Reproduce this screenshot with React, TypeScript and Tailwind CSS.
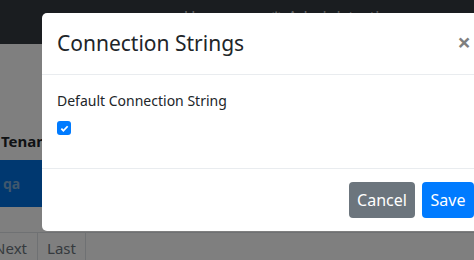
import React from 'react';

export default function App() {
    return (
        <div className="relative w-[474px] h-[260px] overflow-hidden bg-white font-['Noto_Sans',sans-serif] text-[#212529]">
            {/* Page behind the modal */}
            <div className="h-[44px] bg-[#343a40] flex items-start pt-[5px] pl-[170px] gap-[40px] text-[16px] text-[#c8c8c8]">
                <span>⌂ Home</span>
                <span>⚙ Administration</span>
            </div>
            <div className="flex flex-col">
                <div className="h-[116px] flex items-end pb-[8px] pl-[1px]">
                    <span className="font-bold text-[15px]">Tenant</span>
                </div>
                <div className="h-[47px] bg-[#0070e0] flex items-center pl-[3px] text-[14px] font-bold text-[#7faeda]">qa</div>
                <div className="h-[25px]" />
                <div className="h-[28px] flex border-t border-[#dee2e6] text-[15px] text-[#6c757d]">
                    <div className="w-[38px] border-r border-[#dee2e6] flex items-center justify-end pr-[10px] pt-[3px]">Next</div>
                    <div className="w-[48px] border-r border-[#dee2e6] flex items-center justify-center pt-[3px]">Last</div>
                </div>
            </div>

            {/* Backdrop */}
            <div className="absolute inset-0 bg-black/50" />

            {/* Modal */}
            <div className="absolute left-[42px] top-[13px] w-[446px] bg-white rounded-[5px] flex flex-col">
                <div className="h-[62px] border-b border-[#e9ecef] flex items-center justify-between pl-[15px] pr-[17px]">
                    <h5 className="text-[21px] leading-[30px] pb-[1px]">Connection Strings</h5>
                    <span className="text-[24px] font-bold text-black/50 leading-none pb-[3px]">×</span>
                </div>
                <div className="h-[93px] pt-[14px] pl-[15px] flex flex-col">
                    <label className="text-[14px] leading-[24px]">Default Connection String</label>
                    <div className="mt-[8px] w-[14px] h-[14px] rounded-[3px] bg-[#007bff] flex items-center justify-center">
                        <svg width="9" height="9" viewBox="0 0 8 8">
                            <path d="M1.2 4.2 L3 6 L6.8 2" fill="none" stroke="white" strokeWidth="1.6" />
                        </svg>
                    </div>
                </div>
                <div className="h-[63px] border-t border-[#e9ecef] flex items-center justify-end gap-[7px] pr-[14px]">
                    <button className="h-[36px] w-[66px] rounded-[4px] bg-[#6c757d] text-white text-[16px]">Cancel</button>
                    <button className="h-[36px] w-[52px] rounded-[4px] bg-[#007bff] text-white text-[16px]">Save</button>
                </div>
            </div>
        </div>
    );
}
